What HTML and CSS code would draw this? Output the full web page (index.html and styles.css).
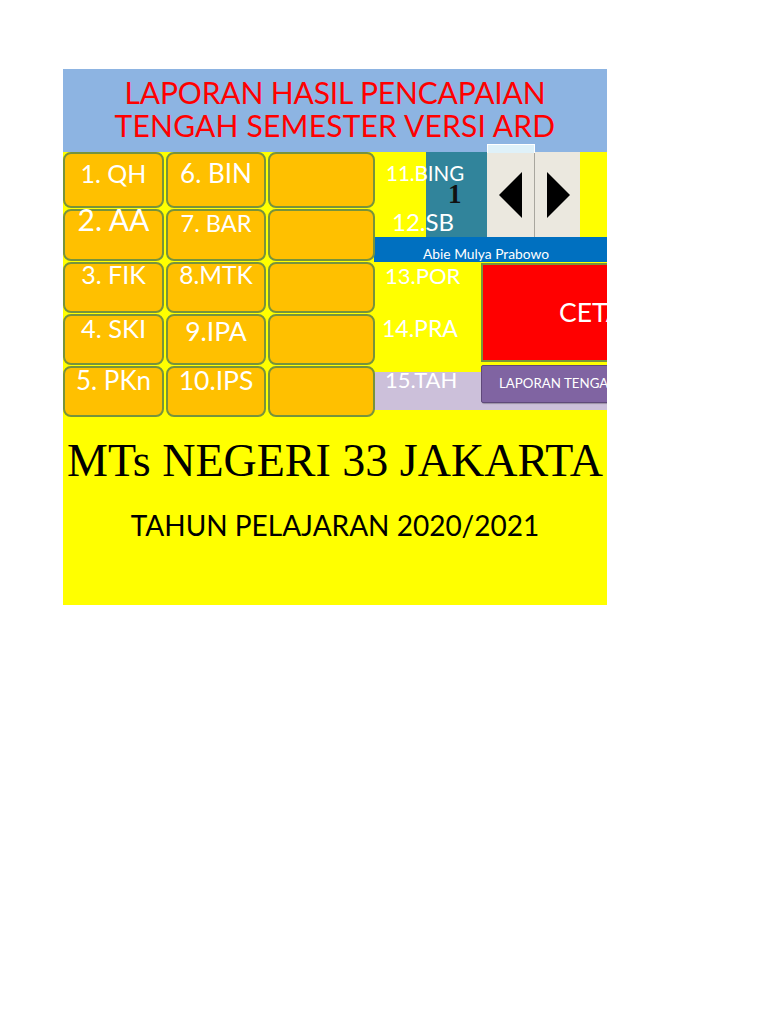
FILE: index.html
```html
<!DOCTYPE html>
<html>
<head>
<meta charset="utf-8">
<link rel="stylesheet" href="styles.css">
</head>
<body>
<div class="sheet">
  <header class="title">
    <div class="title-line t1">LAPORAN HASIL PENCAPAIAN</div>
    <div class="title-line t2">TENGAH SEMESTER VERSI ARD</div>
  </header>
  <div class="middle">
    <div class="left-fill"></div>
    <div class="right">
      <div class="top-row">
        <div class="fill-yellow"></div>
        <div class="teal"></div>
        <div class="nav">
          <div class="nav-btn">
            <svg width="24" height="46" viewBox="0 0 24 46"><polygon points="0,23 23,0 23,46" fill="#000"/></svg>
          </div>
          <div class="nav-btn">
            <svg width="24" height="46" viewBox="0 0 24 46"><polygon points="1,0 24,23 1,46" fill="#000"/></svg>
          </div>
        </div>
        <div class="fill-yellow"></div>
      </div>
      <div class="namebar">Abie Mulya Prabowo</div>
      <div class="mid-fill"></div>
      <div class="lav"></div>
    </div>
  </div>
  <footer class="footer">
    <div class="school">MTs NEGERI 33 JAKARTA</div>
    <div class="year">TAHUN PELAJARAN 2020/2021</div>
  </footer>

  <div class="btn-grid">
    <div class="btn b-qh">1. QH</div>
    <div class="btn b-bin">6. BIN</div>
    <div class="btn"></div>
    <div class="btn b-aa">2. AA</div>
    <div class="btn b-bar">7. BAR</div>
    <div class="btn"></div>
    <div class="btn b-fik">3. FIK</div>
    <div class="btn b-mtk">8.MTK</div>
    <div class="btn"></div>
    <div class="btn b-ski">4. SKI</div>
    <div class="btn b-ipa">9.IPA</div>
    <div class="btn"></div>
    <div class="btn b-pkn">5. PKn</div>
    <div class="btn b-ips">10.IPS</div>
    <div class="btn"></div>
  </div>

  <div class="nav-tab"></div>
  <div class="num">1</div>
  <div class="lbl l11">11.BING</div>
  <div class="lbl l12">12.SB</div>
  <div class="lbl l13">13.POR</div>
  <div class="lbl l14">14.PRA</div>
  <div class="lbl l15">15.TAH</div>
  <div class="cetak"><span>CETAK</span></div>
  <div class="laporan"><span>LAPORAN TENGAH SEMESTER</span></div>
</div>
</body>
</html>
```
FILE: styles.css
```css
html, body {
  margin: 0;
  padding: 0;
  background: #ffffff;
}
body {
  font-family: "Lato", "Open Sans", sans-serif;
}
.sheet {
  position: relative;
  width: 544px;
  margin: 69px 0 0 63px;
  overflow: hidden;
}
.title {
  height: 83px;
  background: #8db4e2;
  color: #ff0000;
  text-align: center;
  font-size: 30px;
  line-height: 33px;
  padding-top: 7px;
  box-sizing: border-box;
}
.t1 { letter-spacing: -0.15px; }
.t2 { letter-spacing: 0.2px; }
.middle {
  display: grid;
  grid-template-columns: 311px 233px;
  height: 258px;
}
.left-fill {
  background: #ffff00;
}
.right {
  display: flex;
  flex-direction: column;
}
.top-row {
  display: grid;
  grid-template-columns: 52px 61px 93px 27px;
  height: 85px;
}
.fill-yellow {
  background: #ffff00;
}
.teal {
  background: #31849b;
}
.nav {
  display: grid;
  grid-template-columns: 48px 45px;
  background: #ece9e0;
}
.nav-btn {
  display: flex;
  align-items: center;
  justify-content: center;
  background: #ebe8df;
  border-right: 1px solid #a8a69e;
}
.nav-btn:last-child {
  border-right: none;
}
.namebar {
  height: 25px;
  box-sizing: border-box;
  background: #0070c0;
  color: #ffffff;
  font-size: 13.8px;
  line-height: 16px;
  padding: 9px 0 0 49px;
  white-space: nowrap;
}
.mid-fill {
  height: 110px;
  background: #ffff00;
}
.lav {
  height: 38px;
  background: #ccc0da;
}
.footer {
  height: 195px;
  background: #ffff00;
  text-align: center;
  color: #000000;
}
.school {
  font-family: "Liberation Serif", "Times New Roman", serif;
  font-size: 46px;
  line-height: 50px;
  padding-top: 26px;
  white-space: nowrap;
}
.year {
  font-size: 28px;
  line-height: 30px;
  padding-top: 24px;
  white-space: nowrap;
}

/* floating shapes on the sheet canvas */
.btn-grid {
  position: absolute;
  left: 0;
  top: 83px;
  display: grid;
  grid-template-columns: 101px 100px 107px;
  grid-template-rows: 56px 52px 51px 51px 51px;
  column-gap: 2px;
  row-gap: 1px;
}
.btn {
  background: #ffc000;
  border: 2px solid #77933c;
  border-radius: 8px;
  box-sizing: border-box;
  color: #ffffff;
  text-align: center;
  white-space: nowrap;
  line-height: 20px;
}
.b-qh  { font-size: 25px;   padding-top: 9px; }
.b-bin { font-size: 26px;   padding-top: 9px; }
.b-aa  { font-size: 30px;   padding-top: 0; line-height: 17px; }
.b-bar { font-size: 23.5px; padding-top: 2px; }
.b-fik { font-size: 25px;   padding-top: 0; }
.b-mtk { font-size: 24.5px; padding-top: 1px; }
.b-ski { font-size: 25.5px; padding-top: 2px; }
.b-ipa { font-size: 26.5px; padding-top: 5px; }
.b-pkn { font-size: 26px;   padding-top: 2px; }
.b-ips { font-size: 26.5px; padding-top: 2px; }

.nav-tab {
  position: absolute;
  left: 424px;
  top: 75px;
  width: 46px;
  height: 8px;
  background: #dff1f9;
  border: 1px solid #ffffff;
  border-bottom: none;
}
.num {
  position: absolute;
  left: 385px;
  top: 110px;
  font-family: "Liberation Serif", "Times New Roman", serif;
  font-weight: bold;
  font-size: 27px;
  line-height: 30px;
  color: #111111;
}
.lbl {
  position: absolute;
  color: #ffffff;
  font-size: 22px;
  line-height: 26px;
  white-space: nowrap;
}
.l11 { left: 323px; top: 91px; font-size: 20.5px; }
.l12 { left: 329px; top: 140px; font-size: 24px; }
.l13 { left: 322px; top: 194px; }
.l14 { left: 319px; top: 246px; font-size: 23px; }
.l15 { left: 322px; top: 298px; }

.cetak {
  position: absolute;
  left: 418px;
  top: 194px;
  width: 240px;
  height: 99px;
  box-sizing: border-box;
  background: #ff0000;
  border: 2px solid #77933c;
  color: #ffffff;
  font-size: 26.5px;
  padding: 31px 0 0 76px;
  white-space: nowrap;
}
.laporan {
  position: absolute;
  left: 418px;
  top: 296px;
  width: 240px;
  height: 38px;
  box-sizing: border-box;
  background: #8064a2;
  border: 1px solid #5f497a;
  border-radius: 2px;
  box-shadow: 1px 1px 1px rgba(0,0,0,0.25);
  color: #ffffff;
  font-size: 13.3px;
  line-height: 34px;
  padding-left: 17px;
  white-space: nowrap;
}
```
